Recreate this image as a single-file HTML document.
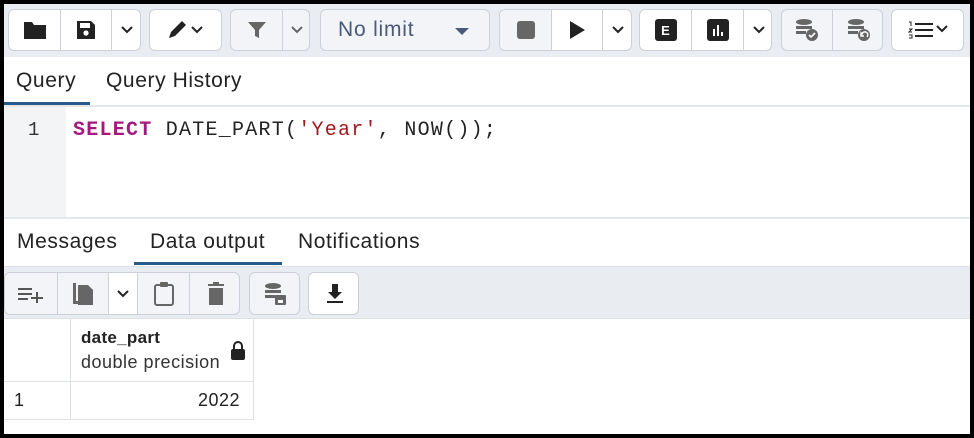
<!DOCTYPE html>
<html><head><meta charset="utf-8"><style>
*{box-sizing:border-box;margin:0;padding:0}
body{width:974px;height:438px;background:#000;position:relative;overflow:hidden;font-family:"Liberation Sans",sans-serif}
.a{position:absolute}
#main{left:4px;top:4px;width:966px;height:430px;background:#fff}
.tb{background:#e9ecf1}
.dis{background:#f2f4f7}
.grp{position:absolute;border:1px solid #ccd1d9;border-radius:6px;overflow:hidden;background:#fff}
.grp .c{position:absolute;top:0;bottom:0;display:flex;align-items:center;justify-content:center;border-right:1px solid #ccd1d9}
.grp .c:last-child{border-right:none}
.tab{position:absolute;font-size:21px;letter-spacing:0.6px;color:#222}
</style></head><body>
<div id="main" class="a"></div>
<div class="a tb" style="left:4px;top:4px;width:966px;height:53px"></div>

<div class="grp" style="left:8px;top:9px;width:133px;height:42px">
 <div class="c" style="left:0;width:52px"><svg width="24" height="20" viewBox="0 0 24 20"><path d="M1 2h8l2 3h12v14H1z" fill="#222"/></svg></div>
 <div class="c" style="left:52px;width:51px"><svg width="20" height="20" viewBox="0 0 20 20"><path d="M1 1h14l4 4v14H1z" fill="#222"/><rect x="4" y="3" width="10" height="5" fill="#fff"/><circle cx="10" cy="13" r="2.6" fill="#fff"/></svg></div>
 <div class="c" style="left:103px;width:30px"><svg width="12" height="8" viewBox="0 0 12 8"><path d="M1 1l5 5 5-5" stroke="#222" stroke-width="2" fill="none"/></svg></div>
</div>
<div class="grp" style="left:149px;top:9px;width:73px;height:42px">
 <div class="c" style="left:0;width:73px"><svg width="42" height="22" viewBox="0 0 42 22"><path d="M3 19l2-6 11-11 4 4-11 11z" fill="#222"/><path d="M26 8l5 5 5-5" stroke="#222" stroke-width="2" fill="none"/></svg></div>
</div>
<div class="grp dis" style="left:230px;top:9px;width:80px;height:42px;background:#f2f4f7">
 <div class="c" style="left:0;width:52px"><svg width="20" height="20" viewBox="0 0 20 20"><path d="M1 2h18l-7 8v8l-4-2v-6z" fill="#666"/></svg></div>
 <div class="c" style="left:52px;width:28px"><svg width="12" height="8" viewBox="0 0 12 8"><path d="M1 1l5 5 5-5" stroke="#666" stroke-width="2" fill="none"/></svg></div>
</div>
<div class="grp" style="left:320px;top:9px;width:170px;height:42px;background:#f2f4f7">
 <div class="a" style="left:17px;top:8px;font-size:21px;letter-spacing:0.8px;color:#4a5a78">No limit</div>
 <div class="a" style="left:134px;top:18px;width:0;height:0;border-left:7px solid transparent;border-right:7px solid transparent;border-top:7px solid #4a5a78"></div>
</div>
<div class="grp" style="left:499px;top:9px;width:133px;height:42px">
 <div class="c dis" style="left:0;width:52px;background:#f2f4f7"><div style="width:18px;height:18px;background:#666;border-radius:3px"></div></div>
 <div class="c" style="left:52px;width:51px"><svg width="16" height="18" viewBox="0 0 16 18"><path d="M1 0l15 9-15 9z" fill="#222"/></svg></div>
 <div class="c" style="left:103px;width:30px"><svg width="12" height="8" viewBox="0 0 12 8"><path d="M1 1l5 5 5-5" stroke="#222" stroke-width="2" fill="none"/></svg></div>
</div>
<div class="grp" style="left:639px;top:9px;width:133px;height:42px">
 <div class="c" style="left:0;width:52px"><div style="width:22px;height:22px;background:#222;border-radius:3px;color:#fff;font-size:13px;font-weight:bold;display:flex;align-items:center;justify-content:center">E</div></div>
 <div class="c" style="left:52px;width:52px"><svg width="22" height="22" viewBox="0 0 22 22"><rect width="22" height="22" rx="3" fill="#222"/><rect x="6" y="10" width="2" height="7" fill="#fff"/><rect x="10" y="6" width="2" height="11" fill="#fff"/><rect x="14" y="13" width="2" height="4" fill="#fff"/></svg></div>
 <div class="c" style="left:104px;width:29px"><svg width="12" height="8" viewBox="0 0 12 8"><path d="M1 1l5 5 5-5" stroke="#222" stroke-width="2" fill="none"/></svg></div>
</div>
<div class="grp" style="left:781px;top:9px;width:102px;height:42px;background:#f2f4f7">
 <div class="c" style="left:0;width:51px"><svg width="26" height="24" viewBox="0 0 26 24"><ellipse cx="10" cy="4" rx="8" ry="3" fill="#666"/><rect x="2" y="8" width="16" height="3" fill="#666"/><rect x="2" y="13" width="10" height="3" fill="#666"/><circle cx="18" cy="17" r="6" fill="#666"/><path d="M15 17l2 2 4-4" stroke="#fff" stroke-width="1.6" fill="none"/></svg></div>
 <div class="c" style="left:51px;width:51px"><svg width="26" height="24" viewBox="0 0 26 24"><ellipse cx="10" cy="4" rx="8" ry="3" fill="#666"/><rect x="2" y="8" width="16" height="3" fill="#666"/><rect x="2" y="13" width="10" height="3" fill="#666"/><circle cx="18" cy="17" r="6" fill="#666"/><path d="M21 19a3 3 0 1 0-5-3l-1-1v3h3" stroke="#fff" stroke-width="1.4" fill="none"/></svg></div>
</div>
<div class="grp" style="left:891px;top:9px;width:73px;height:42px">
 <div class="c" style="left:0;width:73px"><svg width="44" height="20" viewBox="0 0 44 20"><path d="M2 2h2v4M2 9h3l-3 3h3M2 15h3v3H2" stroke="#222" stroke-width="1" fill="none"/><rect x="8" y="3" width="18" height="2" fill="#222"/><rect x="8" y="9" width="18" height="2" fill="#222"/><rect x="8" y="15" width="18" height="2" fill="#222"/><path d="M30 6l5 5 5-5" stroke="#222" stroke-width="2" fill="none"/></svg></div>
</div>

<div class="tab" style="left:16px;top:69px">Query</div>
<div class="tab" style="left:106px;top:69px">Query History</div>
<div class="a" style="left:4px;top:102px;width:86px;height:3px;background:#2a5a8a"></div>
<div class="a" style="left:4px;top:105px;width:966px;height:2px;background:#e4e7eb"></div>
<div class="a" style="left:4px;top:107px;width:62px;height:110px;background:#f3f4f6"></div>
<div class="a" style="left:28px;top:119px;font:19px 'Liberation Mono',monospace;color:#333">1</div>
<div class="a" style="left:73px;top:119px;font:20px 'Liberation Mono',monospace;letter-spacing:1.25px;color:#222;white-space:pre"><b style="color:#a3197f">SELECT</b> DATE_PART(<span style="color:#a0191c">'Year'</span>, NOW());</div>
<div class="a" style="left:4px;top:217px;width:966px;height:2px;background:#e4e7eb"></div>

<div class="tab" style="left:17px;top:230px">Messages</div>
<div class="tab" style="left:150px;top:230px">Data output</div>
<div class="tab" style="left:298px;top:230px">Notifications</div>
<div class="a" style="left:134px;top:262px;width:148px;height:3px;background:#2a5a8a"></div>
<div class="a tb" style="left:4px;top:266px;width:966px;height:53px;border-top:1px solid #dde1e6;border-bottom:1px solid #dde1e6"></div>
<div class="grp" style="left:4px;top:272px;width:236px;height:43px;background:#f2f4f7">
 <div class="c" style="left:0;width:53px"><svg width="30" height="18" viewBox="0 0 30 18"><rect x="2" y="3" width="14" height="2" fill="#555"/><rect x="2" y="8" width="14" height="2" fill="#555"/><rect x="2" y="13" width="10" height="2" fill="#555"/><rect x="15" y="12" width="12" height="2" fill="#555"/><rect x="20" y="7" width="2" height="12" fill="#555"/></svg></div>
 <div class="c" style="left:53px;width:51px"><svg width="24" height="26" viewBox="0 0 24 26"><path d="M2 2h3v18h13v3H2z" fill="#666"/><path d="M7 4h10l5 5v15H7z" fill="#666"/></svg></div>
 <div class="c" style="left:104px;width:29px;background:#fff"><svg width="12" height="8" viewBox="0 0 12 8"><path d="M1 1l5 5 5-5" stroke="#222" stroke-width="2" fill="none"/></svg></div>
 <div class="c" style="left:133px;width:52px"><svg width="22" height="26" viewBox="0 0 22 26"><rect x="2" y="4" width="18" height="20" rx="2" stroke="#666" stroke-width="2" fill="none"/><rect x="7" y="1" width="8" height="5" rx="1" fill="#666"/></svg></div>
 <div class="c" style="left:185px;width:51px"><svg width="18" height="24" viewBox="0 0 18 24"><rect x="1" y="2" width="16" height="2" fill="#666"/><rect x="6" y="0" width="6" height="3" fill="#666"/><path d="M2 6h14v17H2z" fill="#666"/></svg></div>
</div>
<div class="grp" style="left:249px;top:272px;width:51px;height:43px;background:#f2f4f7">
 <div class="c" style="left:0;width:51px"><svg width="26" height="24" viewBox="0 0 26 24"><ellipse cx="10" cy="4" rx="8" ry="3" fill="#666"/><rect x="2" y="8" width="16" height="3" fill="#666"/><rect x="2" y="13" width="10" height="3" fill="#666"/><rect x="12" y="13" width="11" height="10" rx="1" fill="#666"/><rect x="15" y="18" width="5" height="3" fill="#fff"/></svg></div>
</div>
<div class="grp" style="left:308px;top:272px;width:51px;height:43px">
 <div class="c" style="left:0;width:51px"><svg width="20" height="22" viewBox="0 0 20 22"><path d="M7 1h6v8h4l-7 7-7-7h4z" fill="#222"/><rect x="2" y="18" width="16" height="2" fill="#222"/></svg></div>
</div>

<div class="a" style="left:70px;top:319px;width:1px;height:101px;background:#dde1e6"></div>
<div class="a" style="left:253px;top:319px;width:1px;height:101px;background:#dde1e6"></div>
<div class="a" style="left:4px;top:381px;width:250px;height:1px;background:#dde1e6"></div>
<div class="a" style="left:4px;top:419px;width:250px;height:1px;background:#dde1e6"></div>
<div class="a" style="left:81px;top:328px;font-size:17px;letter-spacing:0.3px;font-weight:bold;color:#222">date_part</div>
<div class="a" style="left:81px;top:352px;font-size:18px;letter-spacing:0.5px;color:#333">double precision</div>
<svg class="a" style="left:230px;top:341px" width="16" height="20" viewBox="0 0 16 20"><path d="M4 8V5a4 4 0 0 1 8 0v3" stroke="#222" stroke-width="2" fill="none"/><rect x="1" y="8" width="14" height="11" rx="2" fill="#222"/></svg>
<div class="a" style="left:14px;top:390px;font-size:18px;color:#222">1</div>
<div class="a" style="left:160px;width:80px;text-align:right;top:390px;font-size:18px;letter-spacing:0.5px;color:#222">2022</div>
</body></html>
